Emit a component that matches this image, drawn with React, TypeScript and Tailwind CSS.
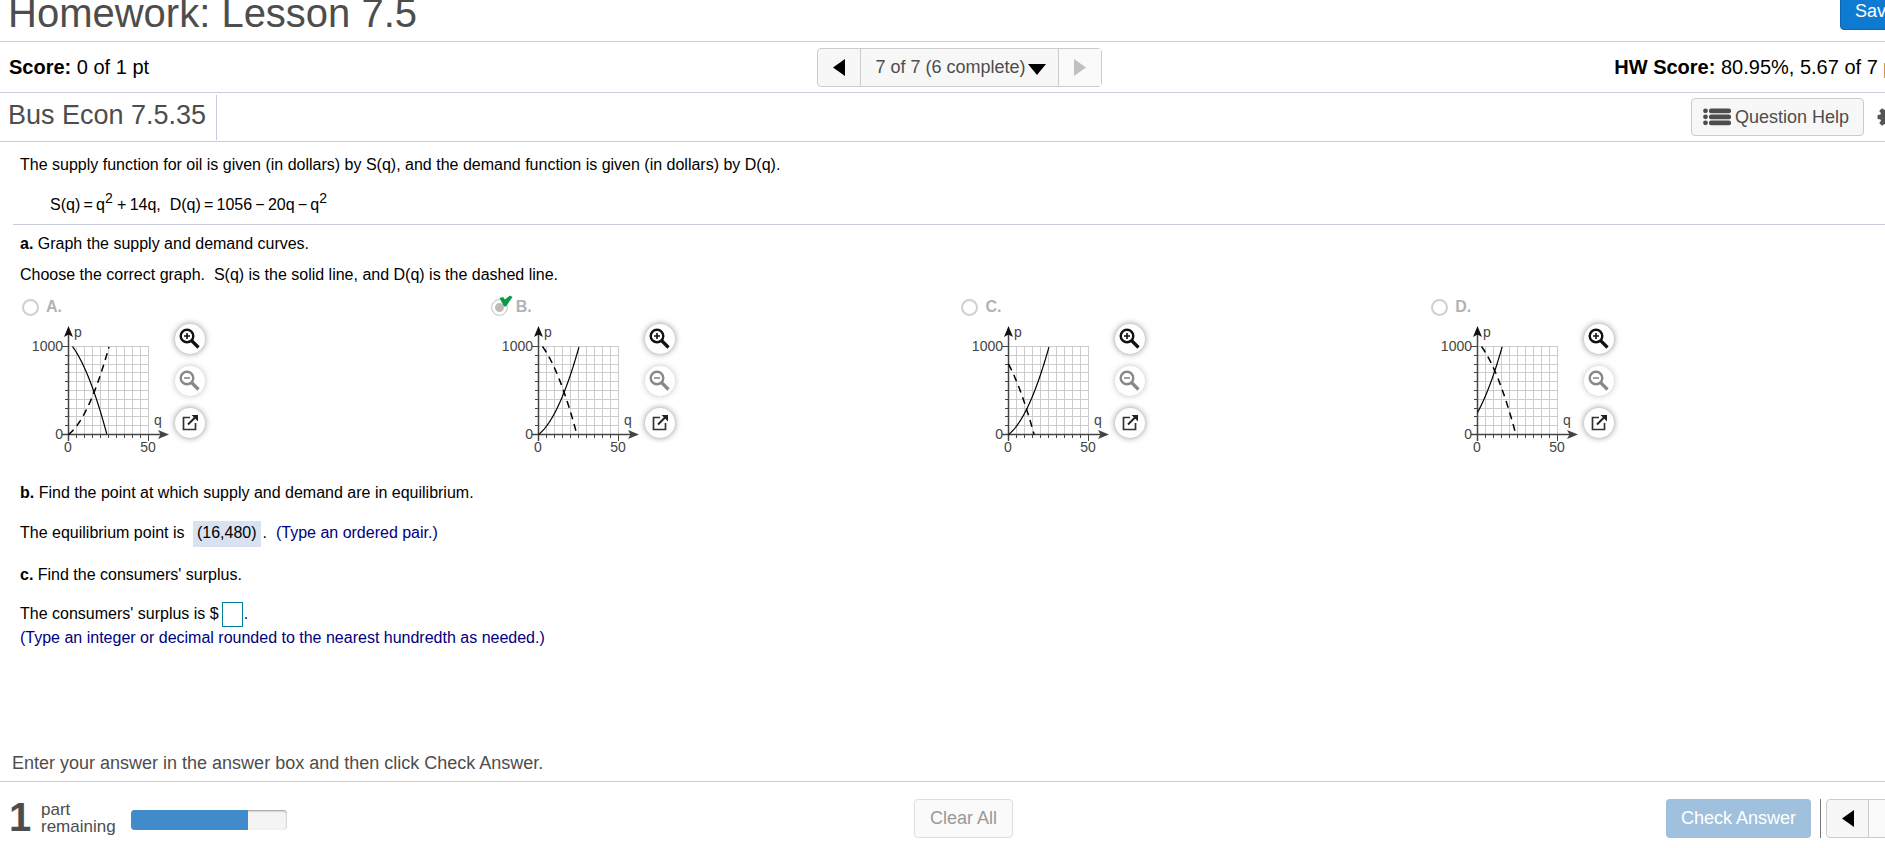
import type { ReactNode } from 'react';

type Curve = (q: number) => number;

type Choice = {
  id: string;
  supply: Curve;
  demand: Curve;
  correct?: boolean;
};

const supply: Curve = (q) => q * q + 14 * q;
const demand: Curve = (q) => 1056 - 20 * q - q * q;

const choices: Choice[] = [
  { id: 'A', supply: demand, demand: supply },
  { id: 'B', supply, demand, correct: true },
  { id: 'C', supply, demand: (q) => 800 - 34 * q - q * q },
  { id: 'D', supply: (q) => 250 + 33 * q + q * q, demand },
];

// plot area: 80 x 88 px for q in 0..50 and p in 0..1000
const X0 = 38.5;
const Y0 = 110.5;

function toPoints(curve: Curve) {
  const points: string[] = [];
  for (let q = 0; q <= 50; q += 0.1) {
    const p = curve(q);
    if (p >= 0 && p <= 1000) {
      points.push(`${(X0 + q * 1.6).toFixed(2)},${(Y0 - p * 0.088).toFixed(2)}`);
    }
  }
  return points.join(' ');
}

const steps = [1, 2, 3, 4, 5, 6, 7, 8, 9, 10];

function Graph({ choice }: { choice: Choice }) {
  return (
    <svg width="142" height="132" viewBox="0 0 142 132" role="img" aria-label={`Graph ${choice.id}`}>
      <g stroke="#cccccc" strokeWidth="1">
        {steps.map((i) => (
          <g key={i}>
            <line x1={X0 + i * 8} y1="22" x2={X0 + i * 8} y2="110" />
            <line x1="39" y1={Math.round(110 - i * 8.8) + 0.5} x2="119" y2={Math.round(110 - i * 8.8) + 0.5} />
          </g>
        ))}
      </g>
      <g stroke="#444444" strokeWidth="1">
        {steps.map((i) => (
          <g key={i}>
            <line x1={X0 + i * 8} y1="110" x2={X0 + i * 8} y2={i === 10 ? 117 : 114} />
            <line
              x1={i === 10 ? 32 : 35}
              y1={Math.round(110 - i * 8.8) + 0.5}
              x2="39"
              y2={Math.round(110 - i * 8.8) + 0.5}
            />
          </g>
        ))}
        <line x1="38.5" y1="6" x2="38.5" y2="117" strokeWidth="1.5" />
        <line x1="32" y1="110.5" x2="134" y2="110.5" strokeWidth="1.5" />
      </g>
      <path d="M38.5 2 L43 13 L38.5 10.5 L34 13 Z" fill="#111111" />
      <path d="M139 110.5 L128 115 L130.5 110.5 L128 106 Z" fill="#444444" />
      <polyline points={toPoints(choice.supply)} fill="none" stroke="#000000" strokeWidth="1.2" />
      <polyline
        points={toPoints(choice.demand)}
        fill="none"
        stroke="#000000"
        strokeWidth="1.5"
        strokeDasharray="7 5"
      />
      <g fill="#444444" fontSize="14">
        <text x="44" y="13">p</text>
        <text x="124" y="101">q</text>
        <text x="33" y="27" textAnchor="end">1000</text>
        <text x="33" y="115" textAnchor="end">0</text>
        <text x="38" y="128" textAnchor="middle">0</text>
        <text x="118" y="128" textAnchor="middle">50</text>
      </g>
    </svg>
  );
}

function RoundButton({ label, disabled, children }: { label: string; disabled?: boolean; children: ReactNode }) {
  return (
    <button
      type="button"
      aria-label={label}
      disabled={disabled}
      className="size-[30px] rounded-full bg-white shadow-[0_0_6px_rgba(0,0,0,0.45)] disabled:shadow-[0_0_6px_rgba(0,0,0,0.25)]"
    >
      <svg width="30" height="30" viewBox="0 0 30 30" fill="none">
        {children}
      </svg>
    </button>
  );
}

function GraphTools() {
  return (
    <div className="flex flex-col gap-3">
      <RoundButton label="Zoom in">
        <circle cx="12" cy="12" r="6.3" stroke="#111" strokeWidth="2.4" />
        <path d="M9 12h6M12 9v6" stroke="#111" strokeWidth="1.6" />
        <path d="M16.5 16.5L23.5 23.5" stroke="#111" strokeWidth="3.2" />
      </RoundButton>
      <RoundButton label="Zoom out" disabled>
        <circle cx="12" cy="12" r="6.3" stroke="#888" strokeWidth="2.4" />
        <path d="M9 12h6" stroke="#888" strokeWidth="1.6" />
        <path d="M16.5 16.5L23.5 23.5" stroke="#888" strokeWidth="3.2" />
      </RoundButton>
      <RoundButton label="Open in a new window">
        <path d="M15 9.5H8.5V21.5H20.5V15" stroke="#333" strokeWidth="1.7" />
        <path d="M13 16.5L20 9.5" stroke="#222" strokeWidth="2" />
        <path d="M16.5 7H23V13.5Z" fill="#222" />
      </RoundButton>
    </div>
  );
}

function ChoiceItem({ choice }: { choice: Choice }) {
  return (
    <div>
      <label className="flex h-6 items-center gap-[7px] pl-px font-bold text-[#b3b3b3]">
        <span className="relative flex size-[18px] items-center justify-center">
          <input
            type="radio"
            name="graph"
            disabled
            defaultChecked={choice.correct}
            className="size-[17px] appearance-none rounded-full border-2 border-[#cfcfcf] bg-white checked:border checked:bg-[#bbb] checked:shadow-[inset_0_0_0_3px_white]"
          />
          {choice.correct && (
            <svg className="absolute -top-[3px] left-2" width="14" height="13" viewBox="0 0 14 13" aria-hidden="true">
              <path d="M0.5 3L4 2L6 4.5L11 0.5L13.5 2L7 11.5H5Z" fill="#0c9a48" />
            </svg>
          )}
        </span>
        {choice.id}.
      </label>
      <div className="flex gap-[3px] pt-[5px] pl-2.5">
        <Graph choice={choice} />
        <GraphTools />
      </div>
    </div>
  );
}

function LeftArrow() {
  return (
    <svg width="12" height="17" viewBox="0 0 12 17" aria-hidden="true">
      <path d="M12 0V17L0 8.5Z" fill="currentColor" />
    </svg>
  );
}

function RightArrow() {
  return (
    <svg width="12" height="17" viewBox="0 0 12 17" aria-hidden="true">
      <path d="M0 0V17L12 8.5Z" fill="currentColor" />
    </svg>
  );
}

function GearIcon() {
  return (
    <svg width="22" height="22" viewBox="0 0 22 22" aria-hidden="true">
      <circle cx="11" cy="11" r="5.5" fill="none" stroke="currentColor" strokeWidth="5" />
      {[0, 45, 90, 135].map((angle) => (
        <g key={angle} transform={`rotate(${angle} 11 11)`} fill="currentColor">
          <rect x="0.5" y="8.8" width="4.5" height="4.4" rx="1" />
          <rect x="17" y="8.8" width="4.5" height="4.4" rx="1" />
        </g>
      ))}
    </svg>
  );
}

function TitleBar() {
  return (
    <header className="flex h-[42px] items-end justify-between border-b border-[#c8cbdc] pr-2 pl-2">
      <h1 className="pb-1 text-[40px] leading-[48px] text-[#4d4d4d]">Homework: Lesson 7.5</h1>
      <button
        type="button"
        className="mb-[11px] h-[39px] shrink-0 rounded border border-[#0b66b5] bg-[#0f7ad1] px-3.5 text-lg text-white"
      >
        Save
      </button>
    </header>
  );
}

function ScoreBar() {
  return (
    <div className="grid h-[51px] grid-cols-[1fr_auto_1fr] items-center border-b border-[#c8cbdc] px-[9px] text-xl text-black">
      <p>
        <b>Score:</b> 0 of 1 pt
      </p>
      <nav className="flex h-[39px] rounded border border-[#ccc] bg-[#f7f7f7]" aria-label="Questions">
        <button type="button" aria-label="Previous question" className="flex w-[42px] items-center justify-center">
          <LeftArrow />
        </button>
        <button
          type="button"
          className="flex items-center gap-0.5 border-x border-[#ccc] pr-3 pl-3.5 text-lg text-[#4d4d4d]"
        >
          7 of 7 (6 complete)
          <svg width="18" height="11" viewBox="0 0 18 11" className="mt-1" aria-hidden="true">
            <path d="M0 0H18L9 11Z" fill="#000" />
          </svg>
        </button>
        <button
          type="button"
          disabled
          aria-label="Next question"
          className="flex w-[42px] items-center justify-center bg-[#fafafa] text-[#c0c0c0]"
        >
          <RightArrow />
        </button>
      </nav>
      <p className="text-right">
        <b>HW Score:</b> 80.95%, 5.67 of 7 pts
      </p>
    </div>
  );
}

function QuestionBar() {
  return (
    <div className="flex h-[49px] items-center justify-between border-b border-[#c8cbdc] pr-5 pl-2">
      <h2 className="flex h-[45px] items-center border-r border-[#c8cbdc] pr-2.5 pb-[3px] text-[27px] text-[#4d4d4d]">
        Bus Econ 7.5.35
      </h2>
      <div className="flex items-center gap-[13px]">
        <button
          type="button"
          className="flex h-[38px] items-center gap-1 rounded border border-[#ccc] bg-[#f7f7f7] pr-3.5 pl-[11px] text-lg text-[#4d4d4d]"
        >
          <svg width="28" height="18" viewBox="0 0 28 18" fill="#4d4d4d" aria-hidden="true">
            {[0, 6, 12].map((y) => (
              <g key={y}>
                <circle cx="2.5" cy={y + 2.8} r="2.4" />
                <rect x="6" y={y + 0.4} width="22" height="4.8" rx="2" />
              </g>
            ))}
          </svg>
          Question Help
        </button>
        <button type="button" aria-label="Settings" className="text-[#555]">
          <GearIcon />
        </button>
      </div>
    </div>
  );
}

function Question() {
  return (
    <main className="flex-1 px-5 pt-[11px] text-base leading-6 text-black">
      <p>
        The supply function for oil is given (in dollars) by S(q), and the demand function is given (in dollars) by
        D(q).
      </p>
      <p className="pt-4 pl-[30px]">
        S(q)&thinsp;=&thinsp;q<sup className="text-sm leading-none">2</sup> +&thinsp;14q,&nbsp;{' '}
        D(q)&thinsp;=&thinsp;1056&thinsp;−&thinsp;20q&thinsp;−&thinsp;q
        <sup className="text-sm leading-none">2</sup>
      </p>
      <hr className="mt-[7px] -ml-[7px] border-[#c8cbdc]" />

      <p className="pt-[7px]">
        <b>a.</b> Graph the supply and demand curves.
      </p>
      <p className="pt-[7px]">
        Choose the correct graph.&nbsp; S(q) is the solid line, and D(q) is the dashed line.
      </p>
      <div className="grid grid-cols-4 pt-2">
        {choices.map((choice) => (
          <ChoiceItem key={choice.id} choice={choice} />
        ))}
      </div>

      <p className="pt-[25px]">
        <b>b.</b> Find the point at which supply and demand are in equilibrium.
      </p>
      <p className="pt-4">
        The equilibrium point is <span className="ml-1 inline-block h-[26px] bg-[#d9e2f1] px-1">(16,480)</span>
        <span className="ml-0.5">.</span>&nbsp;{' '}
        <span className="text-[#000080]">(Type an ordered pair.)</span>
      </p>
      <p className="pt-4">
        <b>c.</b> Find the consumers' surplus.
      </p>
      <div className="mt-[15px] flex h-6 items-center">
        <label htmlFor="surplus">The consumers' surplus is $</label>
        <input id="surplus" type="text" className="mr-px ml-[3px] h-[25px] w-[21px] border border-[#007f99] bg-white" />
        <span className="text-[#000080]">.</span>
      </div>
      <p className="text-[#000080]">(Type an integer or decimal rounded to the nearest hundredth as needed.)</p>
    </main>
  );
}

function Footer() {
  return (
    <footer className="text-[#4d4d4d]">
      <p className="border-b border-[#c8cbdc] pb-1.5 pl-3 text-lg leading-6">
        Enter your answer in the answer box and then click Check Answer.
      </p>
      <div className="grid h-[66px] grid-cols-[1fr_auto_1fr] items-center pt-[7px] pr-[7px] pl-[9px]">
        <div className="flex items-center">
          <span className="w-8 pb-1 text-[40px] leading-none font-bold">1</span>
          <span className="w-[90px] pb-0.5 text-[17px] leading-[17px]">
            part
            <br />
            remaining
          </span>
          <div
            role="progressbar"
            aria-valuenow={75}
            aria-label="Parts completed"
            className="mt-0.5 h-5 w-[156px] overflow-hidden rounded bg-[#f4f4f4] shadow-[inset_0_1px_2px_rgba(0,0,0,0.4)]"
          >
            <div className="h-full w-3/4 bg-[#428bca]" />
          </div>
        </div>
        <button
          type="button"
          disabled
          className="ml-1.5 h-[39px] rounded border border-[#dedede] bg-[#fafafa] px-[15px] pb-0.5 text-lg text-[#999]"
        >
          Clear All
        </button>
        <div className="flex h-[39px] justify-end">
          <button type="button" disabled className="rounded bg-[#9fc1dd] px-[15px] pb-0.5 text-lg text-white">
            Check Answer
          </button>
          <div className="mr-[5px] ml-[9px] w-px bg-[#777]" />
          <div className="flex rounded border border-[#ccc] bg-[#f7f7f7]">
            <button
              type="button"
              aria-label="Previous question"
              className="flex w-[42px] items-center justify-center border-r border-[#ccc] text-black"
            >
              <LeftArrow />
            </button>
            <button
              type="button"
              disabled
              aria-label="Next question"
              className="w-[42px] bg-[#fafafa] pl-5 text-[#c0c0c0]"
            >
              <RightArrow />
            </button>
          </div>
        </div>
      </div>
    </footer>
  );
}

export default function App() {
  return (
    <div className="overflow-hidden bg-white font-['Liberation_Sans',Arial,sans-serif]">
      {/* the player is a little wider than the window and runs off its right edge */}
      <div className="-mr-[34px] flex min-h-screen flex-col">
        <TitleBar />
        <ScoreBar />
        <QuestionBar />
        <Question />
        <Footer />
      </div>
    </div>
  );
}
